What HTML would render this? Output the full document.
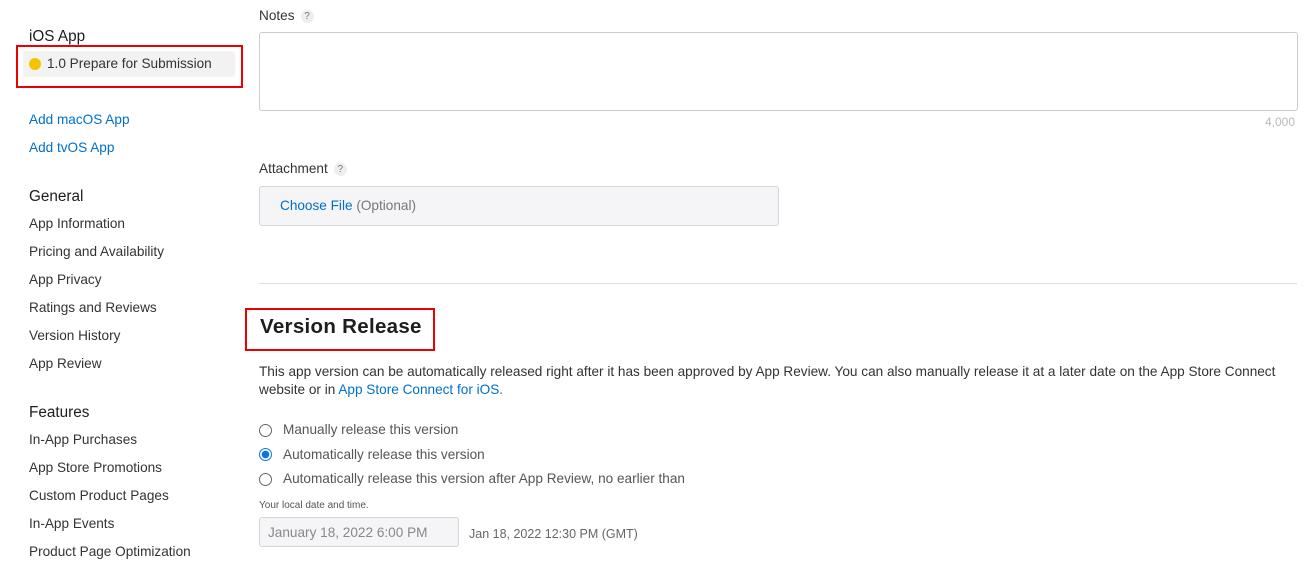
<!DOCTYPE html>
<html><head><meta charset="utf-8"><style>
body{margin:0;width:1307px;height:566px;overflow:hidden;background:#fff;font-family:"Liberation Sans",sans-serif;color:#333;position:relative}
.a{position:absolute;white-space:nowrap}
.s{font-size:13.6px;color:#333}
.l{font-size:13.6px;color:#0070c9}
.h{font-size:15.3px;color:#1d1d1f}
.g{font-size:13.6px;color:#555}
.q{display:inline-block;width:13px;height:13px;border-radius:50%;background:#eee;color:#777;font-size:10px;text-align:center;line-height:13px;margin-left:6px;vertical-align:1px}
.r{position:absolute;width:11px;height:11px;border:1px solid #666;border-radius:50%;left:259px}
</style></head><body>
<div class="a h" style="left:29px;top:28px">iOS App</div>
<div class="a" style="left:23px;top:51px;width:212px;height:26px;background:#f2f2f2;border-radius:4px"></div>
<div class="a" style="left:29px;top:58px;width:12px;height:12px;border-radius:50%;background:#f5c400"></div>
<div class="a s" style="left:47px;top:56px">1.0 Prepare for Submission</div>
<div class="a" style="left:16px;top:45px;width:223px;height:39px;border:2px solid #e00"></div>
<div class="a l" style="left:29px;top:112px">Add macOS App</div>
<div class="a l" style="left:29px;top:140px">Add tvOS App</div>
<div class="a h" style="left:29px;top:188px">General</div>
<div class="a s" style="left:29px;top:216px">App Information</div>
<div class="a s" style="left:29px;top:244px">Pricing and Availability</div>
<div class="a s" style="left:29px;top:272px">App Privacy</div>
<div class="a s" style="left:29px;top:300px">Ratings and Reviews</div>
<div class="a s" style="left:29px;top:328px">Version History</div>
<div class="a s" style="left:29px;top:356px">App Review</div>
<div class="a h" style="left:29px;top:404px">Features</div>
<div class="a s" style="left:29px;top:432px">In-App Purchases</div>
<div class="a s" style="left:29px;top:460px">App Store Promotions</div>
<div class="a s" style="left:29px;top:488px">Custom Product Pages</div>
<div class="a s" style="left:29px;top:516px">In-App Events</div>
<div class="a s" style="left:29px;top:544px">Product Page Optimization</div>

<div class="a s" style="left:259px;top:8px">Notes<span class="q">?</span></div>
<div class="a" style="left:259px;top:32px;width:1037px;height:77px;border:1px solid #ccc;border-radius:3px"></div>
<div class="a" style="left:1265px;top:115px;font-size:12px;color:#bbb">4,000</div>
<div class="a s" style="left:259px;top:161px">Attachment<span class="q">?</span></div>
<div class="a" style="left:259px;top:186px;width:518px;height:38px;border:1px solid #d6d6d6;border-radius:3px;background:#f5f5f7"></div>
<div class="a" style="left:280px;top:198px;font-size:13.6px;color:#0070c9">Choose File <span style="color:#777">(Optional)</span></div>
<div class="a" style="left:259px;top:283px;width:1038px;height:1px;background:#ddd"></div>
<div class="a" style="left:260px;top:315px;font-size:20.5px;font-weight:bold;color:#1d1d1f;letter-spacing:.3px">Version Release</div>
<div class="a" style="left:245px;top:308px;width:186px;height:39px;border:2px solid #e00"></div>
<div class="a s" style="left:259px;top:363px;line-height:18px">This app version can be automatically released right after it has been approved by App Review. You can also manually release it at a later date on the App Store Connect<br>website or in <span style="color:#0070c9">App Store Connect for iOS.</span></div>
<div class="r" style="top:424px"></div>
<div class="a g" style="left:283px;top:422px">Manually release this version</div>
<div class="r" style="top:448px;border-color:#0a74e8;background:radial-gradient(circle,#0a74e8 3.5px,#fff 4px)"></div>
<div class="a g" style="left:283px;top:447px">Automatically release this version</div>
<div class="r" style="top:473px"></div>
<div class="a g" style="left:283px;top:471px">Automatically release this version after App Review, no earlier than</div>
<div class="a" style="left:259px;top:500px;font-size:10px;color:#555">Your local date and time.</div>
<div class="a" style="left:259px;top:517px;width:198px;height:28px;border:1px solid #d6d6d6;border-radius:3px;background:#f5f5f7"></div>
<div class="a" style="left:268px;top:525px;font-size:13.6px;color:#888">January 18, 2022 6:00 PM</div>
<div class="a" style="left:469px;top:527px;font-size:12.5px;color:#666">Jan 18, 2022 12:30 PM (GMT)</div>
</body></html>
